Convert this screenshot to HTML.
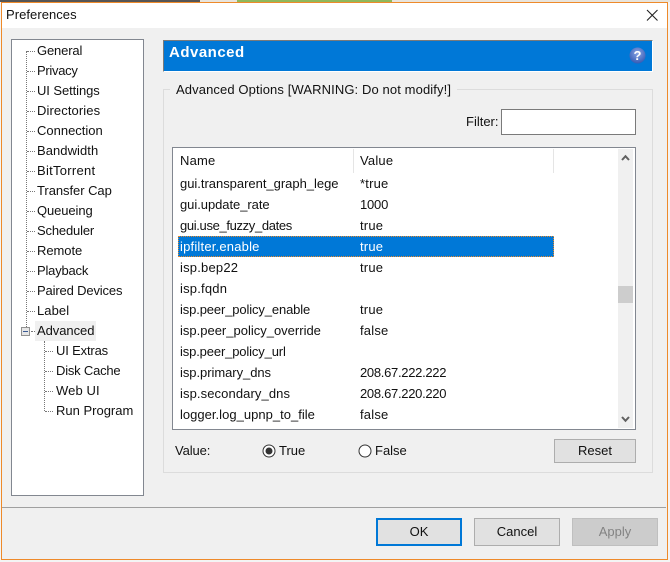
<!DOCTYPE html>
<html><head><meta charset="utf-8"><style>
html,body{margin:0;padding:0;background:#f4f4f4}
body{width:670px;height:562px;position:relative;overflow:hidden;font-family:"Liberation Sans","Noto Sans CJK SC",sans-serif;font-size:13px;color:#111}
.a{position:absolute;box-sizing:border-box}
.t{position:absolute;white-space:nowrap;line-height:16px;height:16px;letter-spacing:.2px}
.d{position:absolute;box-sizing:border-box}
.v{border-left:1px dotted #777;width:1px}
.h{border-top:1px dotted #777;height:1px}
.b{position:absolute;box-sizing:border-box;background:#e1e1e1;border:2px solid #adadad;text-align:center;line-height:24px}
</style></head><body>
<div class="a" style="left:0;top:0;width:670px;height:2px;background:#e8e4dc"></div>
<div class="a" style="left:0;top:0;width:200px;height:2px;background:#555"></div>
<div class="a" style="left:237px;top:0;width:155px;height:2px;background:#8fb85c"></div>
<div class="a" style="left:1px;top:2px;width:667px;height:558px;background:#f0f0f0;border:1px solid #ee8a2a"></div>
<div class="a" style="left:2px;top:3px;width:665px;height:25px;background:#fff"></div>
<div class="t" style="left:6px;top:7px;letter-spacing:.05px">Preferences</div>
<svg class="a" style="left:646px;top:9px" width="13" height="13" viewBox="0 0 13 13"><path d="M1 1L11.5 11.5M11.5 1L1 11.5" stroke="#222" stroke-width="1.1" fill="none"/></svg>

<div class="a" style="left:11px;top:39px;width:133px;height:457px;background:#fff;border:1px solid #828790"></div>
<div class="d v" style="left:26px;top:51px;height:276px"></div>
<div class="d h" style="left:27px;top:51px;width:8px"></div>
<div class="d h" style="left:27px;top:71px;width:8px"></div>
<div class="d h" style="left:27px;top:91px;width:8px"></div>
<div class="d h" style="left:27px;top:111px;width:8px"></div>
<div class="d h" style="left:27px;top:131px;width:8px"></div>
<div class="d h" style="left:27px;top:151px;width:8px"></div>
<div class="d h" style="left:27px;top:171px;width:8px"></div>
<div class="d h" style="left:27px;top:191px;width:8px"></div>
<div class="d h" style="left:27px;top:211px;width:8px"></div>
<div class="d h" style="left:27px;top:231px;width:8px"></div>
<div class="d h" style="left:27px;top:251px;width:8px"></div>
<div class="d h" style="left:27px;top:271px;width:8px"></div>
<div class="d h" style="left:27px;top:291px;width:8px"></div>
<div class="d h" style="left:27px;top:311px;width:8px"></div>
<div class="d h" style="left:31px;top:331px;width:4px"></div>
<div class="a" style="left:35px;top:321px;width:61px;height:20px;background:#f0f0f0"></div>
<div class="a" style="left:21px;top:327px;width:9px;height:9px;background:#e6e6e6;border:1px solid #919191"></div>
<div class="a" style="left:23px;top:331px;width:5px;height:1px;background:#3a5a94"></div>
<div class="d v" style="left:44px;top:341px;height:70px"></div>
<div class="d h" style="left:45px;top:351px;width:8px"></div>
<div class="d h" style="left:45px;top:371px;width:8px"></div>
<div class="d h" style="left:45px;top:391px;width:8px"></div>
<div class="d h" style="left:45px;top:411px;width:8px"></div>
<div class="t" style="left:37px;top:43px;letter-spacing:-.15px">General</div>
<div class="t" style="left:37px;top:63px;letter-spacing:-.3px">Privacy</div>
<div class="t" style="left:37px;top:83px;letter-spacing:-.08px">UI Settings</div>
<div class="t" style="left:37px;top:103px;letter-spacing:.1px">Directories</div>
<div class="t" style="left:37px;top:123px;letter-spacing:0">Connection</div>
<div class="t" style="left:37px;top:143px;letter-spacing:.06px">Bandwidth</div>
<div class="t" style="left:37px;top:163px;letter-spacing:.28px">BitTorrent</div>
<div class="t" style="left:37px;top:183px;letter-spacing:-.05px">Transfer Cap</div>
<div class="t" style="left:37px;top:203px;letter-spacing:-.1px">Queueing</div>
<div class="t" style="left:37px;top:223px;letter-spacing:-.16px">Scheduler</div>
<div class="t" style="left:37px;top:243px;letter-spacing:-.05px">Remote</div>
<div class="t" style="left:37px;top:263px;letter-spacing:-.2px">Playback</div>
<div class="t" style="left:37px;top:283px;letter-spacing:-.15px">Paired Devices</div>
<div class="t" style="left:37px;top:303px;letter-spacing:.08px">Label</div>
<div class="t" style="left:37px;top:323px;letter-spacing:-.05px">Advanced</div>
<div class="t" style="left:56px;top:343px;letter-spacing:-.16px">UI Extras</div>
<div class="t" style="left:56px;top:363px;letter-spacing:-.2px">Disk Cache</div>
<div class="t" style="left:56px;top:383px;letter-spacing:.1px">Web UI</div>
<div class="t" style="left:56px;top:403px;letter-spacing:0">Run Program</div>

<div class="a" style="left:163px;top:40px;width:490px;height:32px;background:#0078d7;border-top:1px solid #7a7a7a;border-left:1px solid #7a7a7a;border-right:1px solid #fff;border-bottom:1px solid #fff"></div>
<div class="t" style="left:169px;top:45px;color:#fff;font-weight:bold;font-size:15px;letter-spacing:.5px">Advanced</div>
<svg class="a" style="left:629px;top:47px" width="17" height="17" viewBox="0 0 17 17"><defs><radialGradient id="g" cx=".5" cy=".35" r=".7"><stop offset="0" stop-color="#8aa6e6"/><stop offset="1" stop-color="#2f55b0"/></radialGradient></defs><circle cx="8.5" cy="8.5" r="8" fill="url(#g)"/><text x="8.5" y="13" text-anchor="middle" font-family="Liberation Sans" font-weight="bold" font-size="13" fill="#fff">?</text></svg>

<div class="a" style="left:163px;top:89px;width:490px;height:384px;border:1px solid #dcdcdc"></div>
<div class="a" style="left:170px;top:84px;width:287px;height:10px;background:#f0f0f0"></div>
<div class="t" style="left:176px;top:82px;letter-spacing:.11px">Advanced Options [WARNING: Do not modify!]</div>
<div class="t" style="left:466px;top:114px;letter-spacing:0">Filter:</div>
<div class="a" style="left:501px;top:109px;width:135px;height:26px;background:#fff;border:1px solid #7a7a7a"></div>

<div class="a" style="left:172px;top:147px;width:464px;height:283px;background:#fff;border:1px solid #828790"></div>
<div class="a" style="left:353px;top:149px;width:1px;height:24px;background:#e5e5e5"></div>
<div class="a" style="left:553px;top:149px;width:1px;height:24px;background:#e5e5e5"></div>
<div class="a" style="left:618px;top:149px;width:15px;height:279px;background:#f0f0f0"></div>
<div class="a" style="left:618px;top:286px;width:15px;height:17px;background:#cdcdcd"></div>
<svg class="a" style="left:621px;top:154px" width="9" height="7" viewBox="0 0 9 7"><path d="M1 6L4.5 2.2L8 6" stroke="#606060" stroke-width="2" fill="none"/></svg>
<svg class="a" style="left:621px;top:416px" width="9" height="7" viewBox="0 0 9 7"><path d="M1 1L4.5 4.8L8 1" stroke="#606060" stroke-width="2" fill="none"/></svg>
<div class="a" style="left:178px;top:236px;width:376px;height:21px;background:#0078d7;border:1px dotted #e8892b"></div>

<div class="t" style="left:180px;top:153px">Name</div><div class="t" style="left:360px;top:153px">Value</div>
<div class="t" style="left:180px;top:176px;letter-spacing:-.02px">gui.transparent_graph_lege</div><div class="t" style="left:360px;top:176px">*true</div>
<div class="t" style="left:180px;top:197px;letter-spacing:-.05px">gui.update_rate</div><div class="t" style="left:360px;top:197px;letter-spacing:-.2px">1000</div>
<div class="t" style="left:180px;top:218px;letter-spacing:-.35px">gui.use_fuzzy_dates</div><div class="t" style="left:360px;top:218px">true</div>
<div class="t" style="left:180px;top:239px;color:#fff">ipfilter.enable</div><div class="t" style="left:360px;top:239px;color:#fff">true</div>
<div class="t" style="left:180px;top:260px">isp.bep22</div><div class="t" style="left:360px;top:260px">true</div>
<div class="t" style="left:180px;top:281px">isp.fqdn</div>
<div class="t" style="left:180px;top:302px;letter-spacing:-.13px">isp.peer_policy_enable</div><div class="t" style="left:360px;top:302px">true</div>
<div class="t" style="left:180px;top:323px;letter-spacing:0">isp.peer_policy_override</div><div class="t" style="left:360px;top:323px">false</div>
<div class="t" style="left:180px;top:344px;letter-spacing:-.14px">isp.peer_policy_url</div>
<div class="t" style="left:180px;top:365px;letter-spacing:-.05px">isp.primary_dns</div><div class="t" style="left:360px;top:365px;letter-spacing:-.3px">208.67.222.222</div>
<div class="t" style="left:180px;top:386px;letter-spacing:.1px">isp.secondary_dns</div><div class="t" style="left:360px;top:386px;letter-spacing:-.3px">208.67.220.220</div>
<div class="t" style="left:180px;top:407px;letter-spacing:.02px">logger.log_upnp_to_file</div><div class="t" style="left:360px;top:407px">false</div>

<div class="t" style="left:175px;top:443px;letter-spacing:-.1px">Value:</div>
<svg class="a" style="left:262px;top:444px" width="14" height="14" viewBox="0 0 14 14"><circle cx="7" cy="7" r="6" fill="#fff" stroke="#333"/><circle cx="7" cy="7" r="3.5" fill="#333"/></svg>
<div class="t" style="left:279px;top:443px;letter-spacing:0">True</div>
<svg class="a" style="left:358px;top:444px" width="14" height="14" viewBox="0 0 14 14"><circle cx="7" cy="7" r="6" fill="#fff" stroke="#333"/></svg>
<div class="t" style="left:375px;top:443px;letter-spacing:0">False</div>
<div class="b" style="left:554px;top:439px;width:82px;height:24px;line-height:21px;border-width:1px">Reset</div>

<div class="a" style="left:2px;top:507px;width:664px;height:1px;background:#a0a0a0"></div>
<div class="b" style="left:376px;top:518px;width:86px;height:28px;border:2px solid #0078d7">OK</div>
<div class="b" style="left:474px;top:518px;width:86px;height:28px;border-width:1px;line-height:26px">Cancel</div>
<div class="b" style="left:572px;top:518px;width:86px;height:28px;border-width:1px;line-height:26px;background:#ccc;border-color:#bfbfbf;color:#838383">Apply</div>
</body></html>
